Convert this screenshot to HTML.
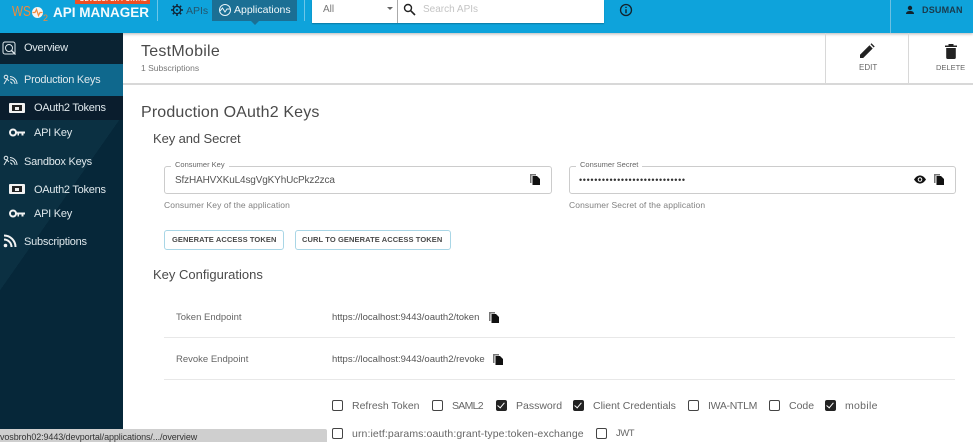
<!DOCTYPE html>
<html><head><meta charset="utf-8"><style>
html,body{margin:0;padding:0;background:#fff}
body{width:973px;height:442px;position:relative;overflow:hidden;font-family:"Liberation Sans",sans-serif;color:#555}
.a,.t{position:absolute}
.t{white-space:nowrap;line-height:1}
svg.a{display:block}
.cb{position:absolute;width:9px;height:9px;border:1.5px solid #444;border-radius:2px;background:#fff}
.cb.on{background:#222;border-color:#222}
.cb.on:after{content:"";position:absolute;left:2px;top:0;width:3px;height:6px;border:solid #fff;border-width:0 1.5px 1.5px 0;transform:rotate(40deg)}
.side{color:#dfe8ec;font-size:11px;letter-spacing:-.25px}
.lab{color:#666;font-size:10.5px}
.hint{color:#808080;font-size:8.5px;letter-spacing:.1px}
</style></head><body>

<!-- header -->
<div class="a" style="left:0;top:0;width:973px;height:33px;background:#0ea3db;box-shadow:0 1px 3px rgba(0,0,0,.3)"></div>
<span class="t" style="left:12px;top:4px;font-size:15px;color:#f08b3c;transform:scaleX(.78);transform-origin:left top">WS</span>
<svg class="a" style="left:31px;top:6px" width="14" height="14" viewBox="0 0 14 14"><circle cx="6.500" cy="6.500" r="5.500" fill="#f4f4f4"/><path d="M1.500 6.500H4l1.500-3 2 6 1.500-3h2.500" fill="none" stroke="#f08b3c" stroke-width="1.200"/></svg>
<span class="t" style="left:43px;top:14px;font-size:9px;color:#f08b3c">2</span>
<span class="t" style="left:53px;top:6px;font-size:13.500px;font-weight:bold;color:#f2fafd">API MANAGER</span>
<div class="a" style="left:75px;top:0;width:75px;height:4px;background:#ef4f23;overflow:hidden"><span class="t" style="left:5px;top:-3px;font-size:6px;font-weight:bold;color:#fff;letter-spacing:.25px">DEVELOPER PORTAL</span></div>
<div class="a" style="left:157px;top:0;width:1px;height:21px;background:#6cc6e9"></div>
<svg class="a" style="left:170px;top:3px" width="14" height="14" viewBox="0 0 14 14"><circle cx="7" cy="7" r="3.600" fill="none" stroke="#123" stroke-width="1.300"/><circle cx="7" cy="7" r="1" fill="#123"/><path d="M7 1v2.500M7 10.500v2.500M1 7h2.500M10.500 7H13M2.800 2.800l1.700 1.700M9.500 9.500l1.700 1.700M2.800 11.200l1.700-1.700M9.500 4.500l1.700-1.700" stroke="#123" stroke-width="1.500"/></svg>
<span class="t" style="left:186px;top:6px;font-size:10.500px;color:#24566e">APIs</span>
<div class="a" style="left:212px;top:0;width:85px;height:21px;background:#1b6f94"></div>
<div class="a" style="left:251px;top:21px;border:4px solid transparent;border-top-color:#1b6f94;border-bottom:0"></div>
<svg class="a" style="left:218px;top:3px" width="14" height="14" viewBox="0 0 14 14"><circle cx="7" cy="7" r="5.500" fill="none" stroke="#e8f4f8" stroke-width="1"/><path d="M2 8l2.500-3 2.500 4 2-3h3" fill="none" stroke="#e8f4f8" stroke-width="1"/></svg>
<span class="t" style="left:234px;top:5px;font-size:10.500px;color:#f2f8fa">Applications</span>
<div class="a" style="left:304px;top:0;width:1px;height:21px;background:#6cc6e9"></div>

<div class="a" style="left:312px;top:0;width:292px;height:23px;background:#fff;box-shadow:0 1px 1px rgba(0,0,0,.25)"></div>
<span class="t" style="left:323px;top:5px;font-size:10px;color:#777">All</span>
<div class="a" style="left:387px;top:7px;border:3.500px solid transparent;border-top-color:#666;border-bottom:0"></div>
<div class="a" style="left:397px;top:0;width:1px;height:23px;background:#aaa"></div>
<svg class="a" style="left:403px;top:3px" width="13" height="13" viewBox="0 0 13 13"><circle cx="5" cy="5" r="3.500" fill="none" stroke="#222" stroke-width="1.400"/><path d="M7.700 7.700L12 12" stroke="#222" stroke-width="1.600"/></svg>
<span class="t" style="left:423px;top:5px;font-size:10px;color:#c4c4c4">Search APIs</span>
<svg class="a" style="left:619px;top:3px" width="14" height="14" viewBox="0 0 14 14"><circle cx="7" cy="7" r="5.500" fill="none" stroke="#12222c" stroke-width="1.300"/><path d="M7 6.300v4M7 3.700v1.300" stroke="#12222c" stroke-width="1.400"/></svg>
<div class="a" style="left:890px;top:0;width:1px;height:33px;background:#6cc0e2"></div>
<svg class="a" style="left:905px;top:5px" width="10" height="10" viewBox="0 0 10 10"><circle cx="5" cy="3" r="2.200" fill="#12222c"/><path d="M1 9c0-2.500 2-3 4-3s4 .5 4 3z" fill="#12222c"/></svg>
<span class="t" style="left:922px;top:6px;font-size:9px;font-weight:bold;color:#1a3a4c;letter-spacing:.2px">DSUMAN</span>

<!-- sidebar -->
<div class="a" style="left:0;top:33px;width:123px;height:396px;background:#052538;background-image:linear-gradient(125deg,#0b3042 0 45%,#062739 45%)"></div>
<div class="a" style="left:0;top:33px;width:123px;height:31px;background:#0a2333"></div>
<div class="a" style="left:0;top:64px;width:123px;height:32px;background:#0f688d"></div>
<div class="a" style="left:0;top:96px;width:123px;height:24px;background:#0a1d2d"></div>
<svg class="a" style="left:2px;top:41px" width="15" height="15" viewBox="0 0 15 15"><rect x="1" y="1" width="12" height="12" rx="2" fill="none" stroke="#dfe8ec"/><circle cx="7" cy="7" r="3.500" fill="none" stroke="#dfe8ec"/><path d="M9.500 9.500l4 4" stroke="#dfe8ec" stroke-width="1.300"/></svg>
<span class="t side" style="left:24px;top:43px">Overview</span>
<svg class="a" style="left:3px;top:74px" width="15" height="12" viewBox="0 0 15 12"><circle cx="3" cy="3" r="1.800" fill="none" stroke="#dfe8ec"/><path d="M1 10l3-5 2 2M7 5a5 5 0 0 1 5 5M7 2.500a7.500 7.500 0 0 1 7 7.500M7 8a2 2 0 0 1 2 2" fill="none" stroke="#dfe8ec"/></svg>
<span class="t side" style="left:24px;top:75px">Production Keys</span>
<svg class="a" style="left:9px;top:102px" width="16" height="12" viewBox="0 0 16 12"><rect x="0" y="1" width="16" height="10" rx="1" fill="#f2f2f2"/><rect x="3" y="3" width="10" height="6" fill="#222"/><rect x="6" y="5" width="4" height="3" fill="#eee"/></svg>
<span class="t side" style="left:34px;top:103px">OAuth2 Tokens</span>
<svg class="a" style="left:9px;top:128px" width="16" height="9" viewBox="0 0 16 9"><circle cx="4" cy="4.500" r="3" fill="none" stroke="#f2f2f2" stroke-width="2"/><path d="M7 3.500h9v2h-1.500v2h-2v-2H10v2H8.500v-2H7z" fill="#f2f2f2"/></svg>
<span class="t side" style="left:34px;top:128px">API Key</span>
<svg class="a" style="left:3px;top:155px" width="15" height="12" viewBox="0 0 15 12"><circle cx="3" cy="3" r="1.800" fill="none" stroke="#dfe8ec"/><path d="M1 10l3-5 2 2M7 5a5 5 0 0 1 5 5M7 2.500a7.500 7.500 0 0 1 7 7.500M7 8a2 2 0 0 1 2 2" fill="none" stroke="#dfe8ec"/></svg>
<span class="t side" style="left:24px;top:157px">Sandbox Keys</span>
<svg class="a" style="left:9px;top:183px" width="16" height="12" viewBox="0 0 16 12"><rect x="0" y="1" width="16" height="10" rx="1" fill="#f2f2f2"/><rect x="3" y="3" width="10" height="6" fill="#222"/><rect x="6" y="5" width="4" height="3" fill="#eee"/></svg>
<span class="t side" style="left:34px;top:185px">OAuth2 Tokens</span>
<svg class="a" style="left:9px;top:209px" width="16" height="9" viewBox="0 0 16 9"><circle cx="4" cy="4.500" r="3" fill="none" stroke="#f2f2f2" stroke-width="2"/><path d="M7 3.500h9v2h-1.500v2h-2v-2H10v2H8.500v-2H7z" fill="#f2f2f2"/></svg>
<span class="t side" style="left:34px;top:209px">API Key</span>
<svg class="a" style="left:3px;top:234px" width="14" height="14" viewBox="0 0 14 14"><circle cx="2.500" cy="11.500" r="1.800" fill="#f2f2f2"/><path d="M1 5.500a7.500 7.500 0 0 1 7.500 7.500M1 1.500A11.500 11.500 0 0 1 12.500 13" fill="none" stroke="#f2f2f2" stroke-width="2"/></svg>
<span class="t side" style="left:24px;top:237px">Subscriptions</span>

<!-- title bar -->
<span class="t" style="left:141px;top:44px;font-size:16px;color:#4a4a4a;letter-spacing:.25px">TestMobile</span>
<span class="t" style="left:141px;top:64px;font-size:8.500px;color:#777">1 Subscriptions</span>
<div class="a" style="left:123px;top:83px;width:850px;height:2px;background:#d8d8d8"></div>
<div class="a" style="left:825px;top:33px;width:1px;height:50px;background:#d8d8d8"></div>
<div class="a" style="left:908px;top:33px;width:1px;height:50px;background:#d8d8d8"></div>
<svg class="a" style="left:859px;top:43px" width="16" height="16" viewBox="0 0 16 16"><path d="M1 15v-3.200L10.500 2.300l3.200 3.200L4.200 15zM11.500 1.300l1-1 3.200 3.200-1 1z" fill="#222"/></svg>
<span class="t" style="left:859px;top:64px;font-size:8px;color:#666">EDIT</span>
<svg class="a" style="left:944px;top:43px" width="14" height="16" viewBox="0 0 14 16"><path d="M1 2.500h12V4H1zM4.500 1h5v1.500h-5zM2.200 5h9.600v9.500a1.500 1.500 0 0 1-1.500 1.500H3.700a1.500 1.500 0 0 1-1.500-1.500z" fill="#222"/></svg>
<span class="t" style="left:936px;top:64px;font-size:7.500px;color:#666">DELETE</span>

<!-- content -->
<span class="t" style="left:141px;top:105px;font-size:16px;color:#4a4a4a;letter-spacing:.15px">Production OAuth2 Keys</span>
<span class="t" style="left:153px;top:132px;font-size:13px;color:#4a4a4a;letter-spacing:-.1px">Key and Secret</span>

<div class="a" style="left:164px;top:166px;width:386px;height:26px;border:1px solid #ccc;border-radius:3px"></div>
<span class="t" style="left:171px;top:161px;font-size:7.500px;color:#666;background:#fff;padding:0 4px">Consumer Key</span>
<span class="t" style="left:175px;top:176px;font-size:10px;color:#555;letter-spacing:-.15px">SfzHAHVXKuL4sgVgKYhUcPkz2zca</span>
<svg class="a" style="left:530px;top:174px" width="10" height="11" viewBox="0 0 10 11"><path d="M0 0h6v1.500H1.500V9H0z" fill="#777"/><path d="M2.500 2h4.500l3 3v6H2.500z" fill="#111"/></svg>
<span class="t hint" style="left:164px;top:201px">Consumer Key of the application</span>

<div class="a" style="left:569px;top:166px;width:385px;height:26px;border:1px solid #ccc;border-radius:3px"></div>
<span class="t" style="left:576px;top:161px;font-size:7.500px;color:#666;background:#fff;padding:0 4px">Consumer Secret</span>
<span class="t" style="left:579px;top:176px;font-size:9px;color:#333;letter-spacing:.66px">••••••••••••••••••••••••••••</span>
<svg class="a" style="left:914px;top:175px" width="12" height="9" viewBox="0 0 12 9"><path d="M0 4.500C2 1.500 4 .5 6 .5s4 1 6 4c-2 3-4 4-6 4s-4-1-6-4z" fill="#111"/><circle cx="6" cy="4.500" r="2.300" fill="#fff"/><circle cx="6" cy="4.500" r="1.300" fill="#111"/></svg>
<svg class="a" style="left:934px;top:174px" width="10" height="11" viewBox="0 0 10 11"><path d="M0 0h6v1.500H1.500V9H0z" fill="#777"/><path d="M2.500 2h4.500l3 3v6H2.500z" fill="#111"/></svg>
<span class="t hint" style="left:569px;top:201px">Consumer Secret of the application</span>

<div class="a" style="left:164px;top:230px;width:118px;height:18px;border:1px solid #a9d6e6;border-radius:3px"></div>
<span class="t" style="left:172px;top:236px;font-size:7.500px;font-weight:bold;color:#4a4a4a;letter-spacing:.1px">GENERATE ACCESS TOKEN</span>
<div class="a" style="left:295px;top:230px;width:154px;height:18px;border:1px solid #a9d6e6;border-radius:3px"></div>
<span class="t" style="left:302px;top:236px;font-size:7.500px;font-weight:bold;color:#4a4a4a;letter-spacing:.1px">CURL TO GENERATE ACCESS TOKEN</span>

<span class="t" style="left:153px;top:268px;font-size:13px;color:#4a4a4a">Key Configurations</span>
<span class="t" style="left:176px;top:313px;font-size:9.500px;color:#666">Token Endpoint</span>
<span class="t" style="left:332px;top:313px;font-size:9.500px;color:#555">https://localhost:9443/oauth2/token</span>
<svg class="a" style="left:489px;top:312px" width="10" height="11" viewBox="0 0 10 11"><path d="M0 0h6v1.500H1.500V9H0z" fill="#777"/><path d="M2.500 2h4.500l3 3v6H2.500z" fill="#111"/></svg>
<div class="a" style="left:164px;top:337px;width:791px;height:1px;background:#e8e8e8"></div>
<span class="t" style="left:176px;top:355px;font-size:9.500px;color:#666">Revoke Endpoint</span>
<span class="t" style="left:332px;top:355px;font-size:9.500px;color:#555">https://localhost:9443/oauth2/revoke</span>
<svg class="a" style="left:493px;top:354px" width="10" height="11" viewBox="0 0 10 11"><path d="M0 0h6v1.500H1.500V9H0z" fill="#777"/><path d="M2.500 2h4.500l3 3v6H2.500z" fill="#111"/></svg>
<div class="a" style="left:164px;top:379px;width:791px;height:1px;background:#e8e8e8"></div>

<!-- checkboxes -->
<i class="cb" style="left:332px;top:400px"></i><span class="t lab" style="left:352px;top:401px">Refresh Token</span>
<i class="cb" style="left:432px;top:400px"></i><span class="t lab" style="left:452px;top:401px;letter-spacing:-.7px">SAML2</span>
<i class="cb on" style="left:496px;top:400px"></i><span class="t lab" style="left:516px;top:401px">Password</span>
<i class="cb on" style="left:573px;top:400px"></i><span class="t lab" style="left:593px;top:401px">Client Credentials</span>
<i class="cb" style="left:688px;top:400px"></i><span class="t lab" style="left:708px;top:401px;letter-spacing:-.3px">IWA-NTLM</span>
<i class="cb" style="left:769px;top:400px"></i><span class="t lab" style="left:789px;top:401px">Code</span>
<i class="cb on" style="left:825px;top:400px"></i><span class="t lab" style="left:845px;top:401px;letter-spacing:.3px">mobile</span>
<i class="cb" style="left:332px;top:428px"></i><span class="t lab" style="left:352px;top:429px;letter-spacing:.1px">urn:ietf:params:oauth:grant-type:token-exchange</span>
<i class="cb" style="left:596px;top:428px"></i><span class="t lab" style="left:616px;top:429px;font-size:9.500px;letter-spacing:-.5px">JWT</span>

<!-- status bar -->
<div class="a" style="left:0;top:429px;width:327px;height:13px;background:#cfcfcf;border-top-right-radius:2px"></div>
<span class="t" style="left:0;top:433px;font-size:9px;color:#333;letter-spacing:-.1px">vosbroh02:9443/devportal/applications/.../overview</span>
</body></html>
